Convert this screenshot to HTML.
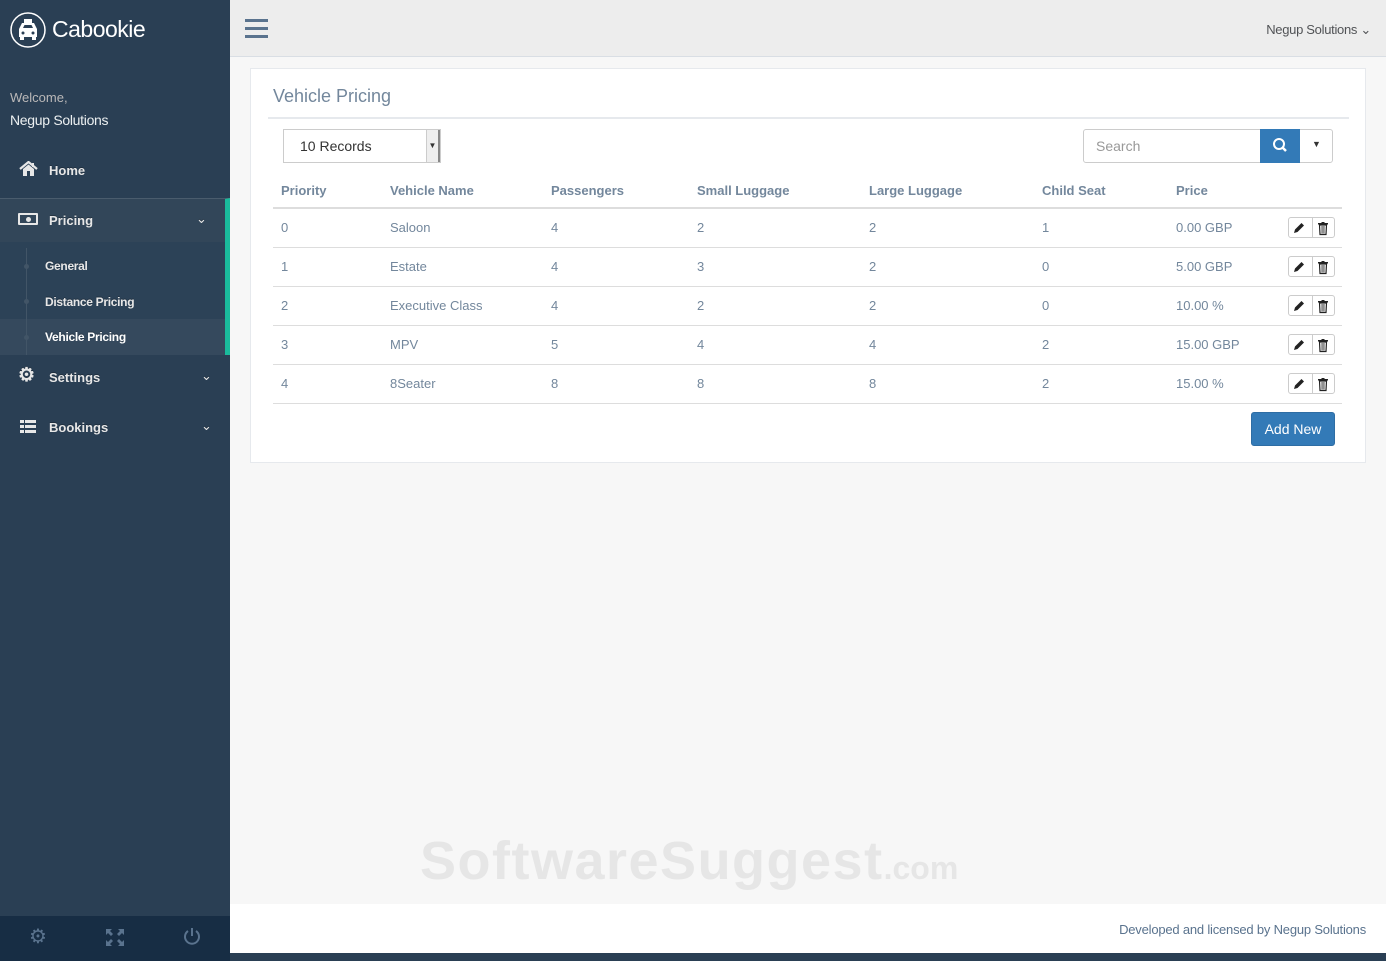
<!DOCTYPE html>
<html><head><meta charset="utf-8"><style>
*{box-sizing:border-box;margin:0;padding:0}
body{width:1386px;height:961px;overflow:hidden;font-family:"Liberation Sans",sans-serif;background:#f7f7f7;position:relative;color:#73879C}
.sb{position:absolute;left:0;top:0;width:230px;height:961px;background:#2a3f54}
.abs{position:absolute}
.menu{color:#E7E7E7;font-size:13px;font-weight:bold;text-shadow:rgba(0,0,0,.25) 0 -1px 0}
.top{position:absolute;left:230px;top:0;width:1156px;height:57px;background:#ededed;border-bottom:1px solid #d9dee4}
.panel{position:absolute;left:250px;top:68px;width:1116px;height:395px;background:#fff;border:1px solid #e6e9ed}
.row{position:absolute;left:273px;width:1069px;height:39px;border-top:1px solid #ddd}
.c{position:absolute;font-size:13px}
.btns{position:absolute;left:1288px;width:47px;height:21px;border:1px solid #ccc;border-radius:3px;background:#fff}
.btns:after{content:"";position:absolute;left:23px;top:0;width:1px;height:19px;background:#ccc}
</style></head><body>
<div class="sb">
 <svg class="abs" style="left:10px;top:12px" width="36" height="36" viewBox="0 0 36 36"><circle cx="18" cy="18" r="17" fill="none" stroke="#fff" stroke-width="1.5"/><rect x="14" y="7" width="8" height="4" fill="#fff"/><path d="M9 17 L12 11 H24 L27 17 V25 H9Z" fill="#fff"/><rect x="10" y="25" width="4" height="3" fill="#fff"/><rect x="22" y="25" width="4" height="3" fill="#fff"/><circle cx="13" cy="21" r="1.5" fill="#2a3f54"/><circle cx="23" cy="21" r="1.5" fill="#2a3f54"/><path d="M13 16 L14.5 13 H21.5 L23 16Z" fill="#2a3f54"/></svg>
 <div class="abs" style="left:52px;top:16px;color:#fff;font-size:23px;letter-spacing:-0.5px">Cabookie</div>
 <div class="abs" style="left:10px;top:90px;color:#BAB8B8;font-size:13px">Welcome,</div>
 <div class="abs" style="left:10px;top:112px;color:#ECF0F1;font-size:14px;letter-spacing:-0.3px">Negup Solutions</div>
 <svg class="abs" style="left:19px;top:161px" width="19" height="16" viewBox="0 0 19 16"><path d="M1 8 L9.5 1 L18 8" fill="none" stroke="#E7E7E7" stroke-width="2.2"/><path d="M4 8 V15 H8 V10 H11 V15 H15 V8 L9.5 3.5Z" fill="#E7E7E7"/><rect x="13" y="2" width="2" height="4" fill="#E7E7E7"/></svg>
 <div class="abs menu" style="left:49px;top:163px">Home</div>
 <div class="abs" style="left:0;top:198px;width:230px;height:157px;background:#2c4257;border-top:1px solid #4a5c6d;border-right:5px solid #1ABB9C"></div>
 <div class="abs" style="left:0;top:199px;width:225px;height:43px;background:#324659"></div>
 <div class="abs" style="left:18px;top:213px;width:20px;height:12px;border:2px solid #E7E7E7;border-radius:1px"><div style="margin:2px auto;width:5px;height:5px;border-radius:50%;background:#E7E7E7"></div></div>
 <div class="abs menu" style="left:49px;top:213px">Pricing</div>
 <div class="abs menu" style="left:196px;top:211px;font-weight:normal">&#8964;</div>
 <div class="abs" style="left:0;top:319px;width:225px;height:36px;background:#35495d"></div>
 <div class="abs" style="left:26px;top:248px;width:1px;height:107px;background:#425567"></div>
 <div class="abs" style="left:24px;top:264px;width:5px;height:5px;border-radius:50%;background:#425567"></div>
 <div class="abs" style="left:24px;top:299px;width:5px;height:5px;border-radius:50%;background:#425567"></div>
 <div class="abs" style="left:24px;top:335px;width:5px;height:5px;border-radius:50%;background:#425567"></div>
 <div class="abs menu" style="left:45px;top:259px;font-size:12px;letter-spacing:-0.3px">General</div>
 <div class="abs menu" style="left:45px;top:295px;font-size:12px;letter-spacing:-0.3px">Distance Pricing</div>
 <div class="abs menu" style="left:45px;top:330px;font-size:12px;color:#fff;letter-spacing:-0.3px">Vehicle Pricing</div>
 <div class="abs menu" style="left:18px;top:364px;font-size:19px">&#9881;</div>
 <div class="abs menu" style="left:49px;top:370px">Settings</div>
 <div class="abs menu" style="left:201px;top:368px;font-weight:normal">&#8964;</div>
 <div class="abs" style="left:20px;top:420px;width:16px;height:13px;background:repeating-linear-gradient(#E7E7E7 0 3px,transparent 3px 5px)"><div style="position:absolute;left:4px;top:0;width:1px;height:13px;background:#2a3f54"></div></div>
 <div class="abs menu" style="left:49px;top:420px">Bookings</div>
 <div class="abs menu" style="left:201px;top:418px;font-weight:normal">&#8964;</div>
 <div class="abs" style="left:0;top:916px;width:230px;height:45px;background:#172D44"></div>
 <div class="abs" style="left:29px;top:924px;color:#5A738E;font-size:20px">&#9881;</div>
 <svg class="abs" style="left:106px;top:929px" width="18" height="17" viewBox="0 0 18 17" fill="#5A738E"><path d="M0 0H6L4 2L7 5L5 7L2 4L0 6Z"/><path d="M18 0H12L14 2L11 5L13 7L16 4L18 6Z"/><path d="M0 17H6L4 15L7 12L5 10L2 13L0 11Z"/><path d="M18 17H12L14 15L11 12L13 10L16 13L18 11Z"/></svg>
 <svg class="abs" style="left:183px;top:927px" width="18" height="18" viewBox="0 0 18 18"><path d="M5 4 A7 7 0 1 0 13 4" fill="none" stroke="#5A738E" stroke-width="2"/><path d="M9 1V9" stroke="#5A738E" stroke-width="2"/></svg>
</div>
<div class="top">
 <div class="abs" style="left:15px;top:19px;width:23px;height:20px;background:repeating-linear-gradient(#5A738E 0 3px,transparent 3px 8px)"></div>
 <div class="abs" style="right:15px;top:22px;color:#515356;font-size:13px;letter-spacing:-0.3px">Negup Solutions &#8964;</div>
</div>
<div class="panel">
 <div class="abs" style="left:22px;top:17px;font-size:18px;color:#73879C">Vehicle Pricing</div>
 <div class="abs" style="left:17px;top:48px;width:1081px;height:2px;background:#E6E9ED"></div>
</div>
<div class="abs" style="left:283px;top:129px;width:158px;height:34px;border:1px solid #ccc;background:#fff"><span style="position:absolute;left:16px;top:8px;font-size:14px;color:#333">10 Records</span><div style="position:absolute;right:0;top:0;width:14px;height:32px;background:#eee;border-left:1px solid #ccc;border-right:2px solid #888;font-size:8px;color:#333;text-align:center;line-height:32px">&#9660;</div></div>
<div class="abs" style="left:1083px;top:129px;width:250px;height:34px;border:1px solid #ccc;border-radius:3px;background:#fff"><span style="position:absolute;left:12px;top:8px;font-size:14px;color:#999">Search</span><div style="position:absolute;left:176px;top:-1px;width:40px;height:34px;background:#337ab7"><svg width="40" height="34"><circle cx="19" cy="15" r="5" fill="none" stroke="#fff" stroke-width="2"/><path d="M22.5 18.5 L26 22" stroke="#fff" stroke-width="2.5"/></svg></div><span style="position:absolute;left:228px;top:9px;font-size:9px;color:#333">&#9660;</span></div>
<div class="c" style="left:281px;top:183px;font-weight:bold">Priority</div>
<div class="c" style="left:390px;top:183px;font-weight:bold">Vehicle Name</div>
<div class="c" style="left:551px;top:183px;font-weight:bold">Passengers</div>
<div class="c" style="left:697px;top:183px;font-weight:bold">Small Luggage</div>
<div class="c" style="left:869px;top:183px;font-weight:bold">Large Luggage</div>
<div class="c" style="left:1042px;top:183px;font-weight:bold">Child Seat</div>
<div class="c" style="left:1176px;top:183px;font-weight:bold">Price</div>
<div class="abs" style="left:273px;top:207px;width:1069px;height:2px;background:#ddd"></div>
<div class="row" style="top:247px"></div><div class="row" style="top:286px"></div><div class="row" style="top:325px"></div><div class="row" style="top:364px"></div><div class="row" style="top:403px;height:1px"></div>

<div class="c" style="left:281px;top:220px">0</div><div class="c" style="left:390px;top:220px">Saloon</div><div class="c" style="left:551px;top:220px">4</div><div class="c" style="left:697px;top:220px">2</div><div class="c" style="left:869px;top:220px">2</div><div class="c" style="left:1042px;top:220px">1</div><div class="c" style="left:1176px;top:220px">0.00 GBP</div>
<div class="c" style="left:281px;top:259px">1</div><div class="c" style="left:390px;top:259px">Estate</div><div class="c" style="left:551px;top:259px">4</div><div class="c" style="left:697px;top:259px">3</div><div class="c" style="left:869px;top:259px">2</div><div class="c" style="left:1042px;top:259px">0</div><div class="c" style="left:1176px;top:259px">5.00 GBP</div>
<div class="c" style="left:281px;top:298px">2</div><div class="c" style="left:390px;top:298px">Executive Class</div><div class="c" style="left:551px;top:298px">4</div><div class="c" style="left:697px;top:298px">2</div><div class="c" style="left:869px;top:298px">2</div><div class="c" style="left:1042px;top:298px">0</div><div class="c" style="left:1176px;top:298px">10.00 %</div>
<div class="c" style="left:281px;top:337px">3</div><div class="c" style="left:390px;top:337px">MPV</div><div class="c" style="left:551px;top:337px">5</div><div class="c" style="left:697px;top:337px">4</div><div class="c" style="left:869px;top:337px">4</div><div class="c" style="left:1042px;top:337px">2</div><div class="c" style="left:1176px;top:337px">15.00 GBP</div>
<div class="c" style="left:281px;top:376px">4</div><div class="c" style="left:390px;top:376px">8Seater</div><div class="c" style="left:551px;top:376px">8</div><div class="c" style="left:697px;top:376px">8</div><div class="c" style="left:869px;top:376px">8</div><div class="c" style="left:1042px;top:376px">2</div><div class="c" style="left:1176px;top:376px">15.00 %</div>

<div class="btns" style="top:217px"></div><div class="btns" style="top:256px"></div><div class="btns" style="top:295px"></div><div class="btns" style="top:334px"></div><div class="btns" style="top:373px"></div>
<svg class="abs" style="left:0;top:0" width="1386" height="420"><defs><g id="ic"><path d="M6 15 L7 11.5 L13.5 5 L16 7.5 L9.5 14Z" fill="#222"/><g transform="translate(30,4)" fill="#222"><rect x="0" y="1" width="10" height="1.5"/><rect x="3.5" y="0" width="3" height="1.5"/><path d="M1.5 3 H8.5 L8 12.5 H2Z" fill="none" stroke="#222" stroke-width="1.2"/><rect x="3.6" y="4" width="0.9" height="7.5"/><rect x="5.5" y="4" width="0.9" height="7.5"/></g></g></defs>
<use href="#ic" x="1288" y="218"/><use href="#ic" x="1288" y="257"/><use href="#ic" x="1288" y="296"/><use href="#ic" x="1288" y="335"/><use href="#ic" x="1288" y="374"/></svg>
<div class="abs" style="left:1251px;top:412px;width:84px;height:34px;background:#337ab7;border:1px solid #2e6da4;border-radius:3px;color:#fff;font-size:14px;text-align:center;line-height:32px">Add New</div>
<div class="abs" style="left:420px;top:830px;font-size:54px;font-weight:bold;color:#e6e6e6;letter-spacing:1.5px">SoftwareSuggest<span style="font-size:32px;letter-spacing:0">.com</span></div>
<div class="abs" style="left:230px;top:904px;width:1156px;height:49px;background:#fff"><span style="position:absolute;right:20px;top:18px;font-size:13px;color:#5A738E;letter-spacing:-0.2px">Developed and licensed by Negup Solutions</span></div>
<div class="abs" style="left:230px;top:953px;width:1156px;height:8px;background:#2a3f54"></div>
</body></html>
